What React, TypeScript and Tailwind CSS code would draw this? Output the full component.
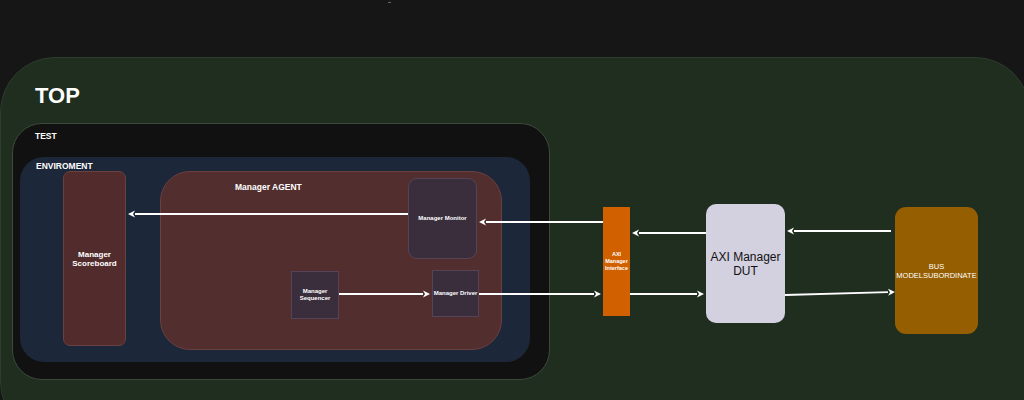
export default function App() {
  const lines: [number, number, number, number][] = [
    [408, 214, 128, 214],
    [603, 222, 479, 222],
    [706, 233, 632, 233],
    [891, 231, 787, 231],
    [339, 294, 430, 294],
    [479, 294, 601, 294],
    [630, 294, 704, 294],
    [785, 295, 895, 292],
  ];
  const f = { fontFamily: '"Liberation Sans", Arial, sans-serif' };
  return (
    <div className="relative w-[1024px] h-[400px] overflow-hidden bg-[#161616]" style={f}>
      <div className="absolute left-[388px] top-[2px] w-[3px] h-[1px] bg-[#666]" />
      <div className="absolute left-0 top-[57px] w-[1030px] h-[380px] rounded-[55px] bg-[#1f2e1f] border border-[#2c3d2c]">
        <div className="absolute left-[34px] top-[21px] text-white font-bold text-[22px]">TOP</div>
      </div>
      <div className="absolute left-[12px] top-[123px] w-[538px] h-[257px] rounded-[30px] bg-[#111111] border border-[#3b4a3b]">
        <div className="absolute left-[22px] top-[6px] text-white font-bold text-[8.5px]">TEST</div>
      </div>
      <div className="absolute left-[20px] top-[157px] w-[510px] h-[205px] rounded-[24px] bg-[#1c2739]">
        <div className="absolute left-[16px] top-[3px] text-white font-bold text-[8.5px]">ENVIROMENT</div>
      </div>
      <div className="absolute left-[63px] top-[171px] w-[63px] h-[175px] rounded-[7px] bg-[#522c2c] border border-[#6a4040] flex items-center justify-center text-center text-white font-bold text-[8px] leading-[9px]">
        Manager<br />Scoreboard
      </div>
      <div className="absolute left-[160px] top-[171px] w-[342px] h-[179px] rounded-[30px] bg-[#532e2e] border border-[#6a4040]">
        <div className="absolute left-[74px] top-[9px] text-white font-bold text-[8.5px]">Manager AGENT</div>
      </div>
      <div className="absolute left-[408px] top-[178px] w-[69px] h-[81px] rounded-[9px] bg-[#3a2e3c] border border-[#554458] flex items-center justify-center text-white font-bold text-[6px]">
        Manager Monitor
      </div>
      <div className="absolute left-[291px] top-[271px] w-[48px] h-[48px] bg-[#3a2e3c] border border-[#554458] flex items-center justify-center text-center text-white font-bold text-[6px] leading-[7px]">
        Manager<br />Sequencer
      </div>
      <div className="absolute left-[432px] top-[270px] w-[47px] h-[47px] bg-[#3a2e3c] border border-[#554458] flex items-center justify-center text-white font-bold text-[6px]">
        Manager Driver
      </div>
      <div className="absolute left-[603px] top-[207px] w-[27px] h-[109px] bg-[#d06000] flex items-center justify-center text-center text-white font-bold text-[5.5px] leading-[7px]">
        AXI<br />Manager<br />Interface
      </div>
      <div className="absolute left-[706px] top-[204px] w-[79px] h-[119px] rounded-[10px] bg-[#d3d0e0] flex items-center justify-center text-center text-[#111] text-[12px] leading-[14px]">
        AXI Manager<br />DUT
      </div>
      <div className="absolute left-[895px] top-[207px] w-[83px] h-[127px] rounded-[11px] bg-[#955e00] flex items-center justify-center text-center text-white text-[7.5px] leading-[9px]">
        BUS<br />MODELSUBORDINATE
      </div>
      <svg className="absolute left-0 top-0" width="1024" height="400">
        {lines.map(([x1, y1, x2, y2], i) => {
          const dx = x2 - x1, dy = y2 - y1;
          const L = Math.hypot(dx, dy);
          const ux = dx / L, uy = dy / L;
          const bx = x2 - ux * 7, by = y2 - uy * 7;
          return (
            <g key={i}>
              <line x1={x1} y1={y1} x2={bx} y2={by} stroke="white" strokeWidth="1.8" />
              <polygon
                points={`${x2},${y2} ${bx - uy * 3.5},${by + ux * 3.5} ${x2 - ux * 5},${y2 - uy * 5} ${bx + uy * 3.5},${by - ux * 3.5}`}
                fill="white"
              />
            </g>
          );
        })}
      </svg>
    </div>
  );
}
